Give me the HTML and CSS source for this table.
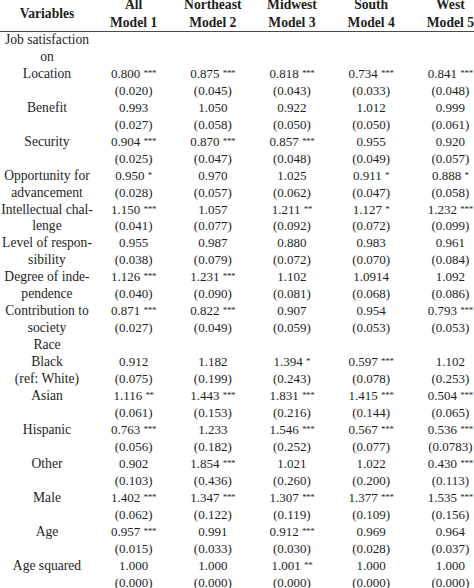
FILE: index.html
```html
<!DOCTYPE html>
<html lang="en">
<head>
<meta charset="utf-8">
<title>Regression table</title>
<link rel="stylesheet" href="styles.css">
</head>
<body>
<table class="reg">
  <colgroup>
    <col class="c-var">
    <col class="c-num"><col class="c-num"><col class="c-num"><col class="c-num"><col class="c-num">
  </colgroup>
  <thead>
    <tr class="h1">
      <th rowspan="2" class="var-head">Variables</th>
      <th>All</th><th>Northeast</th><th>Midwest</th><th>South</th><th>West</th>
    </tr>
    <tr class="h2">
      <th>Model 1</th><th>Model 2</th><th>Model 3</th><th>Model 4</th><th>Model 5</th>
    </tr>
  </thead>
  <tbody>
    <tr><td>Job satisfaction</td><td></td><td></td><td></td><td></td><td></td></tr>
    <tr><td>on</td><td></td><td></td><td></td><td></td><td></td></tr>
    <tr><td>Location</td><td>0.800 <span class="sig">***</span></td><td>0.875 <span class="sig">***</span></td><td>0.818 <span class="sig">***</span></td><td>0.734 <span class="sig">***</span></td><td>0.841 <span class="sig">***</span></td></tr>
    <tr><td></td><td>(0.020)</td><td>(0.045)</td><td>(0.043)</td><td>(0.033)</td><td>(0.048)</td></tr>
    <tr><td>Benefit</td><td>0.993</td><td>1.050</td><td>0.922</td><td>1.012</td><td>0.999</td></tr>
    <tr><td></td><td>(0.027)</td><td>(0.058)</td><td>(0.050)</td><td>(0.050)</td><td>(0.061)</td></tr>
    <tr><td>Security</td><td>0.904 <span class="sig">***</span></td><td>0.870 <span class="sig">***</span></td><td>0.857 <span class="sig">***</span></td><td>0.955</td><td>0.920</td></tr>
    <tr><td></td><td>(0.025)</td><td>(0.047)</td><td>(0.048)</td><td>(0.049)</td><td>(0.057)</td></tr>
    <tr><td>Opportunity for</td><td>0.950 <span class="sig">*</span></td><td>0.970</td><td>1.025</td><td>0.911 <span class="sig">*</span></td><td>0.888 <span class="sig">*</span></td></tr>
    <tr><td>advancement</td><td>(0.028)</td><td>(0.057)</td><td>(0.062)</td><td>(0.047)</td><td>(0.058)</td></tr>
    <tr><td>Intellectual chal-</td><td>1.150 <span class="sig">***</span></td><td>1.057</td><td>1.211 <span class="sig">**</span></td><td>1.127 <span class="sig">*</span></td><td>1.232 <span class="sig">***</span></td></tr>
    <tr><td>lenge</td><td>(0.041)</td><td>(0.077)</td><td>(0.092)</td><td>(0.072)</td><td>(0.099)</td></tr>
    <tr><td>Level of respon-</td><td>0.955</td><td>0.987</td><td>0.880</td><td>0.983</td><td>0.961</td></tr>
    <tr><td>sibility</td><td>(0.038)</td><td>(0.079)</td><td>(0.072)</td><td>(0.070)</td><td>(0.084)</td></tr>
    <tr><td>Degree of inde-</td><td>1.126 <span class="sig">***</span></td><td>1.231 <span class="sig">***</span></td><td>1.102</td><td>1.0914</td><td>1.092</td></tr>
    <tr><td>pendence</td><td>(0.040)</td><td>(0.090)</td><td>(0.081)</td><td>(0.068)</td><td>(0.086)</td></tr>
    <tr><td>Contribution to</td><td>0.871 <span class="sig">***</span></td><td>0.822 <span class="sig">***</span></td><td>0.907</td><td>0.954</td><td>0.793 <span class="sig">***</span></td></tr>
    <tr><td>society</td><td>(0.027)</td><td>(0.049)</td><td>(0.059)</td><td>(0.053)</td><td>(0.053)</td></tr>
    <tr><td>Race</td><td></td><td></td><td></td><td></td><td></td></tr>
    <tr><td>Black</td><td>0.912</td><td>1.182</td><td>1.394 <span class="sig">*</span></td><td>0.597 <span class="sig">***</span></td><td>1.102</td></tr>
    <tr><td>(ref: White)</td><td>(0.075)</td><td>(0.199)</td><td>(0.243)</td><td>(0.078)</td><td>(0.253)</td></tr>
    <tr><td>Asian</td><td>1.116 <span class="sig">**</span></td><td>1.443 <span class="sig">***</span></td><td>1.831 <span class="sig">***</span></td><td>1.415 <span class="sig">***</span></td><td>0.504 <span class="sig">***</span></td></tr>
    <tr><td></td><td>(0.061)</td><td>(0.153)</td><td>(0.216)</td><td>(0.144)</td><td>(0.065)</td></tr>
    <tr><td>Hispanic</td><td>0.763 <span class="sig">***</span></td><td>1.233</td><td>1.546 <span class="sig">***</span></td><td>0.567 <span class="sig">***</span></td><td>0.536 <span class="sig">***</span></td></tr>
    <tr><td></td><td>(0.056)</td><td>(0.182)</td><td>(0.252)</td><td>(0.077)</td><td>(0.0783)</td></tr>
    <tr><td>Other</td><td>0.902</td><td>1.854 <span class="sig">***</span></td><td>1.021</td><td>1.022</td><td>0.430 <span class="sig">***</span></td></tr>
    <tr><td></td><td>(0.103)</td><td>(0.436)</td><td>(0.260)</td><td>(0.200)</td><td>(0.113)</td></tr>
    <tr><td>Male</td><td>1.402 <span class="sig">***</span></td><td>1.347 <span class="sig">***</span></td><td>1.307 <span class="sig">***</span></td><td>1.377 <span class="sig">***</span></td><td>1.535 <span class="sig">***</span></td></tr>
    <tr><td></td><td>(0.062)</td><td>(0.122)</td><td>(0.119)</td><td>(0.109)</td><td>(0.156)</td></tr>
    <tr><td>Age</td><td>0.957 <span class="sig">***</span></td><td>0.991</td><td>0.912 <span class="sig">***</span></td><td>0.969</td><td>0.964</td></tr>
    <tr><td></td><td>(0.015)</td><td>(0.033)</td><td>(0.030)</td><td>(0.028)</td><td>(0.037)</td></tr>
    <tr><td>Age squared</td><td>1.000</td><td>1.000</td><td>1.001 <span class="sig">**</span></td><td>1.000</td><td>1.000</td></tr>
    <tr><td></td><td>(0.000)</td><td>(0.000)</td><td>(0.000)</td><td>(0.000)</td><td>(0.000)</td></tr>
  </tbody>
</table>
</body>
</html>
```
FILE: styles.css
```css
html, body {
  margin: 0;
  padding: 0;
  background: #ffffff;
  overflow: hidden;
}

body {
  font-family: "Liberation Serif", "Times New Roman", serif;
  font-size: 13px;
  color: #1e1e1e;
}

.reg {
  table-layout: fixed;
  width: 490px;
  border-collapse: collapse;
  border-spacing: 0;
  margin-top: -4px;
}

.c-var { width: 94px; }
.c-num { width: 79.2px; }

.reg th,
.reg td {
  padding: 0;
  text-align: center;
  white-space: nowrap;
  vertical-align: middle;
}

.reg thead th {
  font-weight: bold;
  font-size: 13.6px;
  line-height: 17.5px;
  height: 17.5px;
}

.reg .var-head {
  padding-top: 1px;
}

.reg thead tr.h2 th,
.reg thead .var-head {
  border-bottom: 1px solid #4a4a4a;
}

.reg tbody td {
  line-height: 16.95px;
  height: 16.95px;
}

.reg tbody td:first-child {
  font-size: 13.6px;
}

.sig {
  font-size: 9px;
  line-height: 1;
  letter-spacing: -0.3px;
  vertical-align: 2px;
}
```
